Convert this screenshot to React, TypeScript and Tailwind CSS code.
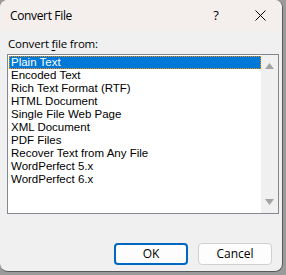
const items = [
  "Plain Text",
  "Encoded Text",
  "Rich Text Format (RTF)",
  "HTML Document",
  "Single File Web Page",
  "XML Document",
  "PDF Files",
  "Recover Text from Any File",
  "WordPerfect 5.x",
  "WordPerfect 6.x",
];

export default function App() {
  return (
    <div className="w-[286px] h-[275px] bg-[#9a9a9a] overflow-hidden">
      <div className="w-[283px] h-[272px] bg-[#f0f0f0] rounded-[8px] border-r border-b border-[#5a5a5a] overflow-hidden flex flex-col font-['Segoe_UI','Open_Sans',sans-serif] text-black">
        {/* title bar */}
        <div className="h-[31px] shrink-0 bg-[#f4efec] flex items-center pl-[10px]">
          <span className="text-[12px] tracking-[-0.35px] flex-1">Convert File</span>
          <span className="text-[13px] w-[10px] mr-[34px] text-center">?</span>
          <svg width="11" height="11" viewBox="0 0 11 11" className="mr-[16px]">
            <path d="M0.5 0.5 L10.5 10.5 M10.5 0.5 L0.5 10.5" stroke="#000" strokeWidth="1" />
          </svg>
        </div>

        <div className="flex flex-col px-[7px] pt-[4px]">
          <div className="text-[11.5px] tracking-[-0.2px] leading-[18px] pl-[1px]">
            Convert <span className="underline underline-offset-2">f</span>ile from:
          </div>

          {/* list box */}
          <div className="mt-[1px] w-[272px] h-[160px] border border-[#828790] bg-white flex">
            <ul className="flex-1 pt-[1px] pl-[1px] font-['Liberation_Sans',Arial,sans-serif] text-[11.5px]">
              {items.map((item, i) => (
                <li
                  key={item}
                  className={
                    i === 0
                      ? "h-[13px] leading-[13px] pl-[2px] bg-[#0078d7] text-white outline-1 outline-dotted outline-[#ff8c00] -outline-offset-1"
                      : "h-[13px] leading-[13px] pl-[2px]"
                  }
                >
                  {item}
                </li>
              ))}
            </ul>
            <div className="w-[17px] bg-[#f0f0f0] flex flex-col justify-between items-center py-[8px]">
              <svg width="9" height="6" viewBox="0 0 9 6">
                <path d="M0 6 L4.5 0 L9 6 Z" fill="#a3a3a3" />
              </svg>
              <svg width="9" height="6" viewBox="0 0 9 6">
                <path d="M0 0 L4.5 6 L9 0 Z" fill="#a3a3a3" />
              </svg>
            </div>
          </div>

          {/* buttons */}
          <div className="flex justify-end gap-[10px] mt-[29px] pr-[3px]">
            <button className="w-[74px] h-[22px] rounded-[4px] border-2 border-[#0067c0] bg-[#fdfdfd] text-[12px] leading-none">
              OK
            </button>
            <button className="w-[74px] h-[22px] rounded-[4px] border border-[#d0d0d0] bg-[#fdfdfd] text-[12px] leading-none">
              Cancel
            </button>
          </div>
        </div>
      </div>
    </div>
  );
}
